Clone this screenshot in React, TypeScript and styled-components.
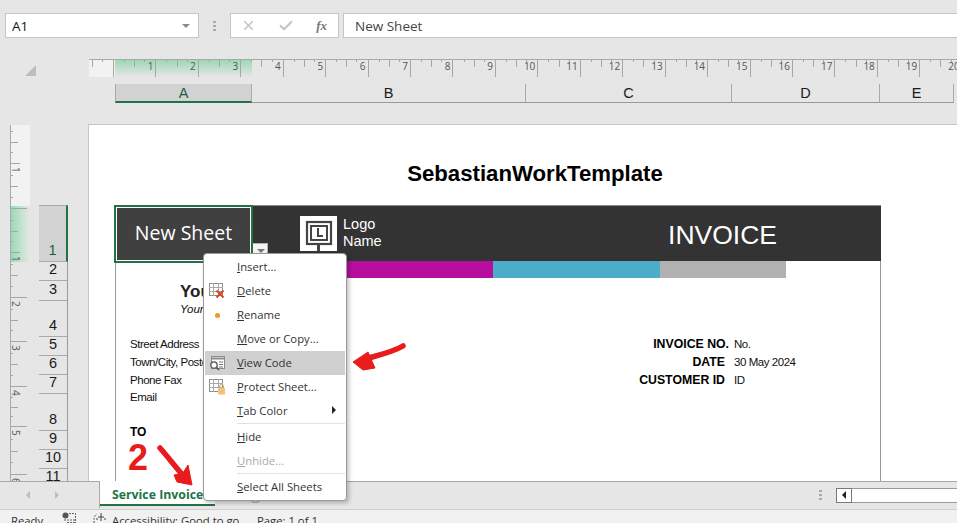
import { Check, X } from "lucide-react";
import styled, { createGlobalStyle } from "styled-components";

const GlobalStyle = createGlobalStyle`
  html, body {
    margin: 0;
    height: 100%;
    overflow: hidden;
    background: #e6e6e6;
  }
  * {
    box-sizing: border-box;
  }
`;

const Window = styled.div`
  position: relative;
  width: 957px;
  height: 523px;
  overflow: hidden;
  display: flex;
  flex-direction: column;
  background: #e6e6e6;
  font-family: "Open Sans", "Liberation Sans", sans-serif;
  color: #222;
`;

const FormulaBar = styled.div`
  display: flex;
  height: 25px;
  margin-top: 13px;
  padding-left: 5px;
`;

const Field = styled.div`
  height: 25px;
  display: flex;
  align-items: center;
  background: #fff;
  border: 1px solid #c6c6c6;
  font-size: 13.5px;
`;

const NameBox = styled(Field)`
  width: 194px;
  padding: 0 6px;
  justify-content: space-between;
  color: #111;
`;

const Caret = styled.span`
  width: 0;
  height: 0;
  border-left: 4px solid transparent;
  border-right: 4px solid transparent;
  border-top: 4px solid #8a8a8a;
  margin-right: 2px;
`;

const Grip = styled.div<{ $h: number }>`
  width: 3px;
  height: ${(p) => p.$h}px;
  background: repeating-linear-gradient(#aaa 0 2px, transparent 2px 4px);
`;

const GripSlot = styled.div`
  width: 31px;
  display: flex;
  align-items: center;
  justify-content: center;
`;

const FxBox = styled(Field)`
  width: 109px;
  justify-content: space-between;
  padding: 0 11px 0 10px;
  color: #c4c4c4;
`;

const FxLabel = styled.span`
  font-family: "Liberation Serif", serif;
  font-style: italic;
  font-weight: 700;
  font-size: 13px;
  color: #777;
`;

const FormulaInput = styled(Field)`
  flex: 1;
  margin-left: 4px;
  padding-left: 11px;
  border-right: none;
  color: #444;
`;

const RulerRow = styled.div`
  display: flex;
  height: 18px;
  margin-top: 21px;
`;

const Corner = styled.div`
  width: 89px;
  padding: 6px 0 0 25px;
`;

const CornerMark = styled.div`
  width: 11px;
  height: 11px;
  background: #bdbdbd;
  clip-path: polygon(100% 0, 100% 100%, 0 100%);
`;

const TopRuler = styled.div`
  flex: 1;
  display: flex;
  overflow: hidden;
  border-top: 1px solid #aaa;
  background:
    linear-gradient(#f2f2f2, #f2f2f2) 0 0 / 26px 100% no-repeat,
    linear-gradient(180deg, #9dd7b6, #e6e6e6) 26px 0 / 137px 100% no-repeat;
`;

const Inch = styled.div<{ $first?: boolean }>`
  flex: 0 0 42.45px;
  margin-left: ${(p) => (p.$first ? "-17.5px" : "0")};
  padding-right: 2px;
  text-align: right;
  font-size: 10px;
  line-height: 12px;
  color: #555;
  border-right: 1px solid #a6a6a6;
  background:
    linear-gradient(#a6a6a6, #a6a6a6) 50% 0 / 1px 7px no-repeat,
    linear-gradient(#a6a6a6, #a6a6a6) 25% 0 / 1px 2px no-repeat,
    linear-gradient(#a6a6a6, #a6a6a6) 75% 0 / 1px 2px no-repeat;
`;

const ColumnRow = styled.div`
  display: flex;
  height: 19px;
  margin-top: 7px;
  padding-left: 115px;
`;

const ColumnHead = styled.div<{ $w: number; $on?: boolean }>`
  width: ${(p) => p.$w}px;
  text-align: center;
  font-family: "Liberation Sans", sans-serif;
  font-size: 14.5px;
  line-height: 19px;
  color: ${(p) => (p.$on ? "#1d5c3a" : "#1a1a1a")};
  background: ${(p) => (p.$on ? "#d2d2d2" : "transparent")};
  border-right: 1px solid #aaa;
  border-bottom: ${(p) => (p.$on ? "2px solid #217346" : "1px solid #9a9a9a")};
  &:first-child {
    border-left: 1px solid #aaa;
  }
`;

const Main = styled.div`
  flex: 1;
  min-height: 0;
  display: flex;
  margin-top: 21px;
`;

const SideRuler = styled.div`
  width: 20px;
  margin-left: 10px;
  margin-top: 1px;
  overflow: hidden;
  border-left: 1px solid #aaa;
  background:
    linear-gradient(#f2f2f2, #f2f2f2) 0 0 / 100% 81px no-repeat,
    linear-gradient(90deg, #9dd7b6, #c2e4d0 55%, #e6e6e6) 0 81px / 100% 56px no-repeat;
`;

const SideInch = styled.div<{ $h: number; $first?: boolean }>`
  height: ${(p) => p.$h}px;
  margin-top: ${(p) => (p.$first ? "-5px" : "0")};
  padding: 3px 9px 0 0;
  font-size: 10px;
  line-height: 10px;
  color: #555;
  writing-mode: vertical-rl;
  background:
    linear-gradient(#a6a6a6, #a6a6a6) 0 100% / 16px 1px no-repeat,
    linear-gradient(#a6a6a6, #a6a6a6) 0 50% / 7px 1px no-repeat,
    linear-gradient(#a6a6a6, #a6a6a6) 0 25% / 2px 1px no-repeat,
    linear-gradient(#a6a6a6, #a6a6a6) 0 75% / 2px 1px no-repeat;
`;

const RowHeads = styled.div`
  width: 29px;
  margin-left: 9px;
  padding-top: 81px;
  display: flex;
  flex-direction: column;
`;

const RowHead = styled.div<{ $h: number; $on?: boolean }>`
  flex: 0 0 ${(p) => p.$h}px;
  display: flex;
  align-items: flex-end;
  justify-content: center;
  padding-bottom: 3px;
  font-family: "Liberation Sans", sans-serif;
  font-size: 14.5px;
  line-height: 15px;
  color: ${(p) => (p.$on ? "#1d5c3a" : "#1a1a1a")};
  background: ${(p) => (p.$on ? "#d2d2d2" : "transparent")};
  border-top: ${(p) => (p.$on ? "1px solid #aaa" : "none")};
  border-bottom: 1px solid #aaa;
  border-right: ${(p) => (p.$on ? "2px solid #217346" : "1px solid #9a9a9a")};
`;

const Sheet = styled.div`
  flex: 1;
  min-width: 0;
  margin-left: 20px;
  padding-left: 26px;
  overflow: hidden;
  background: #fff;
  border-top: 1px solid #c6c6c6;
  border-left: 1px solid #c6c6c6;
  font-family: "Liberation Sans", sans-serif;
  color: #111;
`;

const TitleRow = styled.div`
  width: 840px;
  height: 81px;
  padding-top: 37px;
  text-align: center;
  font-size: 22.2px;
  line-height: 24px;
  font-weight: 700;
  color: #000;
`;

const Banner = styled.div`
  display: flex;
  width: 766px;
  height: 55px;
`;

const SelectedCell = styled.div`
  position: relative;
  z-index: 1;
  flex: 0 0 139px;
  align-self: flex-start;
  height: 58px;
  margin: -1px -1px 0 -1px;
  padding-bottom: 3px;
  display: flex;
  align-items: center;
  justify-content: center;
  background: #404040;
  border: 2px solid #217346;
  box-shadow: inset 0 0 0 1px #fff;
  font-family: "Open Sans", sans-serif;
  font-size: 19.5px;
  font-weight: 500;
  color: #fff;
`;

const BannerBody = styled.div`
  flex: 1;
  display: flex;
  align-items: center;
  margin-top: -1px;
  padding: 0 104px 0 48px;
  background: #333;
  border-top: 1px solid #8a8a8a;
  color: #fff;
`;

const LogoName = styled.div`
  margin: -2px 0 0 6px;
  font-size: 14.5px;
  line-height: 17px;
`;

const InvoiceWord = styled.div`
  margin: 3px 0 0 auto;
  font-size: 26.5px;
`;

const FilterButton = styled.div`
  position: absolute;
  left: 252px;
  top: 243px;
  width: 16px;
  height: 14px;
  padding: 5px 0 0 4px;
  background: #f4f4f4;
  border: 1px solid #b0b0b0;
`;

const FilterCaret = styled.div`
  width: 0;
  height: 0;
  border-left: 4px solid transparent;
  border-right: 4px solid transparent;
  border-top: 4px solid #777;
`;

const InvoiceBody = styled.div`
  width: 766px;
  height: 221px;
  display: grid;
  grid-template-columns: 136px 273px 206px 149px;
  grid-template-rows: 17px 21px 36px 18px 18px 18px 37px 18px 18px 18px;
  border-left: 1px solid #9a9a9a;
  border-right: 1px solid #9a9a9a;
`;

const ColorStrip = styled.div`
  grid-column: 2 / -1;
  grid-row: 1;
  display: flex;
`;

const ColorBlock = styled.div<{ $w: number; $c: string }>`
  width: ${(p) => p.$w}px;
  background: ${(p) => p.$c};
`;

const CompanyName = styled.div`
  grid-column: 1 / 3;
  grid-row: 2;
  padding: 4px 0 0 64px;
  font-size: 17px;
  line-height: 20px;
  font-weight: 700;
  color: #222;
`;

const Slogan = styled.div`
  grid-column: 1 / 3;
  grid-row: 3;
  padding-left: 64px;
  font-size: 11.5px;
  line-height: 20px;
  font-style: italic;
`;

const AddressLine = styled.div<{ $row: number }>`
  grid-column: 1 / 3;
  grid-row: ${(p) => p.$row};
  padding-left: 14px;
  font-size: 11.5px;
  line-height: 18px;
  letter-spacing: -0.45px;
`;

const EmailLine = styled(AddressLine)`
  margin-top: -1px;
`;

const ToLabel = styled.div`
  grid-column: 1;
  grid-row: 8;
  padding-left: 14px;
  font-size: 12px;
  line-height: 12px;
  font-weight: 700;
  color: #000;
`;

const FieldLabel = styled.div<{ $row: number; $pad?: number }>`
  grid-column: 3;
  grid-row: ${(p) => p.$row};
  padding-right: ${(p) => p.$pad ?? 6}px;
  text-align: right;
  font-size: 12.3px;
  line-height: 18px;
  font-weight: 700;
  color: #000;
`;

const FieldValue = styled.div<{ $row: number }>`
  grid-column: 4;
  grid-row: ${(p) => p.$row};
  padding-left: 3px;
  font-size: 11.5px;
  line-height: 18px;
  letter-spacing: -0.45px;
`;

const TabBar = styled.div`
  display: flex;
  align-items: flex-start;
  height: 28px;
  border-top: 1px solid #a9a9a9;
  background: #e6e6e6;
`;

const TabNav = styled.div`
  width: 100px;
  height: 26px;
  display: flex;
  align-items: center;
  gap: 25px;
  padding-left: 26px;
  border-right: 1px solid #a9a9a9;
`;

const NavArrow = styled.span<{ $left?: boolean }>`
  width: 0;
  height: 0;
  border-top: 4px solid transparent;
  border-bottom: 4px solid transparent;
  border-right: ${(p) => (p.$left ? "4px solid #bdbdbd" : "none")};
  border-left: ${(p) => (p.$left ? "none" : "4px solid #bdbdbd")};
`;

const Tab = styled.div`
  width: 115px;
  height: 25px;
  margin-top: -1px;
  padding: 5px 0 0 12px;
  background: #fff;
  border-bottom: 2px solid #217346;
  font-size: 12.3px;
  line-height: 18px;
  font-weight: 700;
  color: #217346;
  white-space: nowrap;
`;

const AddSheet = styled.div`
  width: 15px;
  height: 15px;
  margin: 6px 0 0 33px;
  border: 1px solid #9a9a9a;
  border-radius: 50%;
`;

const TabBarRight = styled.div`
  margin-left: auto;
  height: 26px;
  display: flex;
  align-items: center;
`;

const ScrollButton = styled.div`
  width: 16px;
  height: 15px;
  margin-left: 14px;
  display: flex;
  align-items: center;
  justify-content: center;
  background: #fff;
  border: 1px solid #7a7a7a;
`;

const ScrollArrow = styled.span`
  width: 0;
  height: 0;
  border-top: 4px solid transparent;
  border-bottom: 4px solid transparent;
  border-right: 4px solid #222;
`;

const ScrollTrack = styled.div`
  width: 105px;
  height: 15px;
  background: #fff;
  border-top: 1px solid #9a9a9a;
  border-bottom: 1px solid #9a9a9a;
`;

const StatusBar = styled.div`
  display: flex;
  align-items: flex-start;
  height: 14px;
  padding-left: 11px;
  background: #f1f1f1;
  border-top: 1px solid #cfcfcf;
  font-size: 11.3px;
  line-height: 21px;
  color: #333;
  white-space: nowrap;
`;

const StatusReady = styled.span`
  width: 51px;
`;

const StatusIcon = styled.svg<{ $gap?: number }>`
  display: block;
  flex: none;
  margin: 2px 0 0 ${(p) => p.$gap ?? 0}px;
`;

const StatusAccess = styled.span`
  margin-left: 3px;
  width: 145px;
`;

const Menu = styled.div`
  position: absolute;
  left: 203px;
  top: 253px;
  width: 144px;
  height: 248px;
  padding: 1px;
  background: #fff;
  border: 1px solid #9a9a9a;
  border-radius: 4px;
  box-shadow: 2px 2px 4px rgba(0, 0, 0, 0.25);
  font-size: 11.3px;
  z-index: 3;
`;

const MenuItem = styled.div<{ $on?: boolean; $off?: boolean }>`
  display: flex;
  align-items: center;
  height: 24px;
  padding-bottom: 2px;
  background: ${(p) => (p.$on ? "#d0d0d0" : "transparent")};
  color: ${(p) => (p.$off ? "#a9a9a9" : "#333")};
  white-space: nowrap;
`;

const MenuIconSlot = styled.div`
  flex: 0 0 32px;
  display: flex;
  align-items: center;
  padding: 2px 0 0 4px;
`;

const SubArrow = styled.span`
  margin-left: auto;
  margin-right: 9px;
  width: 0;
  height: 0;
  border-top: 4px solid transparent;
  border-bottom: 4px solid transparent;
  border-left: 4px solid #222;
`;

const RenameDot = styled.span`
  width: 5px;
  height: 5px;
  margin-left: 6px;
  border-radius: 50%;
  background: #f7941d;
`;

const MenuLine = styled.div`
  height: 1px;
  margin: 0 0 1px 32px;
  background: #e2e2e2;
`;

const Annotation = styled.svg`
  position: absolute;
  left: 0;
  top: 0;
  z-index: 4;
  pointer-events: none;
`;

const StepNumber = styled.div`
  position: absolute;
  left: 128px;
  top: 439px;
  z-index: 4;
  font-family: "Liberation Sans", sans-serif;
  font-size: 36px;
  line-height: 38px;
  font-weight: 700;
  color: #e81c1c;
`;

const columns = [
  { name: "A", w: 137 },
  { name: "B", w: 274 },
  { name: "C", w: 206 },
  { name: "D", w: 148 },
  { name: "E", w: 74 },
];

const rows = [57, 17, 20, 36, 18, 18, 18, 37, 18, 18, 19];

const sideInches = [
  { h: 44, label: "" },
  { h: 45, label: "1" },
  { h: 44, label: "" },
  { h: 45, label: "1" },
  { h: 44, label: "2" },
  { h: 45, label: "3" },
  { h: 40, label: "4" },
  { h: 48, label: "5" },
  { h: 44, label: "6" },
];

function GridGlyph() {
  return (
    <>
      <rect x="0.5" y="0.5" width="13" height="12" fill="#fff" stroke="#8c8c8c" />
      <path d="M0 4.5h14M0 8.5h14M4.5 0v13M9.5 0v13" stroke="#a8a8a8" />
    </>
  );
}

function LogoMark() {
  return (
    <svg width="37" height="35" viewBox="0 0 37 35">
      <rect width="37" height="35" fill="#fff" />
      <g fill="none" stroke="#444">
        <rect x="7" y="6" width="24" height="22" strokeWidth="2.2" />
        <rect x="11" y="10" width="16" height="14" strokeWidth="2" />
        <path d="M18 12v8h5" strokeWidth="2" />
        <path d="M18.5 28v7" strokeWidth="3" />
      </g>
    </svg>
  );
}

export default function App() {
  return (
    <Window>
      <GlobalStyle />
      <FormulaBar>
        <NameBox>
          A1
          <Caret />
        </NameBox>
        <GripSlot>
          <Grip $h={10} />
        </GripSlot>
        <FxBox>
          <X size={15} strokeWidth={2.6} />
          <Check size={16} strokeWidth={3.2} />
          <FxLabel>fx</FxLabel>
        </FxBox>
        <FormulaInput>New Sheet</FormulaInput>
      </FormulaBar>

      <RulerRow>
        <Corner>
          <CornerMark />
        </Corner>
        <TopRuler>
          <Inch $first />
          {Array.from({ length: 20 }, (_, i) => (
            <Inch key={i}>{i + 1}</Inch>
          ))}
        </TopRuler>
      </RulerRow>

      <ColumnRow>
        {columns.map((col) => (
          <ColumnHead key={col.name} $w={col.w} $on={col.name === "A"}>
            {col.name}
          </ColumnHead>
        ))}
      </ColumnRow>

      <Main>
        <SideRuler>
          {sideInches.map((inch, i) => (
            <SideInch key={i} $h={inch.h} $first={i === 0}>
              {inch.label}
            </SideInch>
          ))}
        </SideRuler>
        <RowHeads>
          {rows.map((h, i) => (
            <RowHead key={i} $h={h} $on={i === 0}>
              {i + 1}
            </RowHead>
          ))}
        </RowHeads>
        <Sheet>
          <TitleRow>SebastianWorkTemplate</TitleRow>
          <Banner>
            <SelectedCell>New Sheet</SelectedCell>
            <BannerBody>
              <LogoMark />
              <LogoName>
                Logo
                <br />
                Name
              </LogoName>
              <InvoiceWord>INVOICE</InvoiceWord>
            </BannerBody>
          </Banner>
          <InvoiceBody>
            <ColorStrip>
              <ColorBlock $w={241} $c="#b80e9f" />
              <ColorBlock $w={167} $c="#4badc7" />
              <ColorBlock $w={126} $c="#b1b1b1" />
            </ColorStrip>
            <CompanyName>Your Company</CompanyName>
            <Slogan>Your Slogan</Slogan>
            <AddressLine $row={4}>Street Address</AddressLine>
            <AddressLine $row={5}>Town/City, Postcode</AddressLine>
            <AddressLine $row={6}>Phone Fax</AddressLine>
            <EmailLine $row={7}>Email</EmailLine>
            <ToLabel>TO</ToLabel>
            <FieldLabel $row={4} $pad={2}>
              INVOICE NO.
            </FieldLabel>
            <FieldValue $row={4}>No.</FieldValue>
            <FieldLabel $row={5}>DATE</FieldLabel>
            <FieldValue $row={5}>30 May 2024</FieldValue>
            <FieldLabel $row={6}>CUSTOMER ID</FieldLabel>
            <FieldValue $row={6}>ID</FieldValue>
          </InvoiceBody>
        </Sheet>
      </Main>

      <TabBar>
        <TabNav>
          <NavArrow $left />
          <NavArrow />
        </TabNav>
        <Tab>Service Invoice</Tab>
        <AddSheet />
        <TabBarRight>
          <Grip $h={11} />
          <ScrollButton>
            <ScrollArrow />
          </ScrollButton>
          <ScrollTrack />
        </TabBarRight>
      </TabBar>

      <StatusBar>
        <StatusReady>Ready</StatusReady>
        <StatusIcon width="14" height="12" viewBox="0 0 14 12">
          <circle cx="3.5" cy="3.5" r="3" fill="#555" />
          <path d="M7 1.5h6.5V12M2 8h11M5 10.5h8" stroke="#666" fill="none" strokeDasharray="2 1" />
        </StatusIcon>
        <StatusIcon $gap={17} width="16" height="12" viewBox="0 0 16 12">
          <path d="M1 11V7a6 6 0 0 1 3-5" stroke="#555" fill="none" strokeDasharray="2 1.2" />
          <path d="M8 1v8M5 5h6M3 7h2M11 7h2" stroke="#444" fill="none" />
        </StatusIcon>
        <StatusAccess>Accessibility: Good to go</StatusAccess>
        <span>Page: 1 of 1</span>
      </StatusBar>

      <FilterButton>
        <FilterCaret />
      </FilterButton>

      <Menu>
        <MenuItem>
          <MenuIconSlot />
          <span>
            <u>I</u>nsert...
          </span>
        </MenuItem>
        <MenuItem>
          <MenuIconSlot>
            <svg width="16" height="16" viewBox="0 0 16 16">
              <GridGlyph />
              <path d="M7.5 7.5l7 7M14.5 7.5l-7 7" stroke="#d24726" strokeWidth="2" />
            </svg>
          </MenuIconSlot>
          <span>
            <u>D</u>elete
          </span>
        </MenuItem>
        <MenuItem>
          <MenuIconSlot>
            <RenameDot />
          </MenuIconSlot>
          <span>
            <u>R</u>ename
          </span>
        </MenuItem>
        <MenuItem>
          <MenuIconSlot />
          <span>
            <u>M</u>ove or Copy...
          </span>
        </MenuItem>
        <MenuItem $on>
          <MenuIconSlot>
            <svg width="16" height="15" viewBox="0 0 16 15">
              <rect x="2.5" y="0.5" width="13" height="12" fill="#fff" stroke="#8c8c8c" />
              <path d="M3 2.5h12" stroke="#8c8c8c" strokeWidth="2" />
              <path d="M10 6h4M10 8.5h4M10 11h4" stroke="#777" />
              <circle cx="5" cy="9" r="3.2" fill="#fff" stroke="#555" strokeWidth="1.3" />
              <path d="M7.4 11.4L10 14" stroke="#555" strokeWidth="1.6" />
            </svg>
          </MenuIconSlot>
          <span>
            <u>V</u>iew Code
          </span>
        </MenuItem>
        <MenuItem>
          <MenuIconSlot>
            <svg width="16" height="16" viewBox="0 0 16 16">
              <GridGlyph />
              <rect x="9" y="9" width="7" height="6.5" fill="#f0c27a" />
              <path d="M10.5 9V7.5a2 2 0 0 1 4 0V9" stroke="#c9a15f" fill="none" />
            </svg>
          </MenuIconSlot>
          <span>
            <u>P</u>rotect Sheet...
          </span>
        </MenuItem>
        <MenuItem>
          <MenuIconSlot />
          <span>
            <u>T</u>ab Color
          </span>
          <SubArrow />
        </MenuItem>
        <MenuLine />
        <MenuItem>
          <MenuIconSlot />
          <span>
            <u>H</u>ide
          </span>
        </MenuItem>
        <MenuItem $off>
          <MenuIconSlot />
          <span>
            <u>U</u>nhide...
          </span>
        </MenuItem>
        <MenuLine />
        <MenuItem>
          <MenuIconSlot />
          <span>
            <u>S</u>elect All Sheets
          </span>
        </MenuItem>
      </Menu>

      <StepNumber>2</StepNumber>
      <Annotation width="957" height="523" viewBox="0 0 957 523">
        <path
          d="M403 346c-10 6-24 9-38 13"
          fill="none"
          stroke="#e81c1c"
          strokeWidth="5.5"
          strokeLinecap="round"
        />
        <path d="M353 362l15-10 7 16-12 2z" fill="#e81c1c" stroke="#e81c1c" strokeLinejoin="round" />
        <path
          d="M160 448c8 9 14 17 21 25"
          fill="none"
          stroke="#e81c1c"
          strokeWidth="5.5"
          strokeLinecap="round"
        />
        <path d="M192 485l-4-20-5 8-9 2 3 7z" fill="#e81c1c" stroke="#e81c1c" strokeLinejoin="round" />
      </Annotation>
    </Window>
  );
}
